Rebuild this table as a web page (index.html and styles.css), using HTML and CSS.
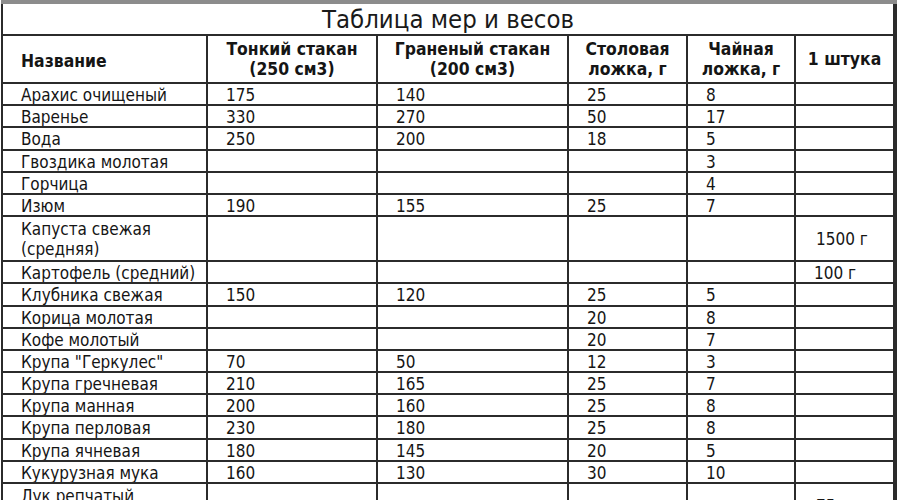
FILE: index.html
```html
<!DOCTYPE html>
<html lang="ru">
<head>
<meta charset="utf-8">
<title>Таблица мер и весов</title>
<link rel="stylesheet" href="styles.css">
</head>
<body>
<div class="sheet">
  <div class="title">Таблица мер и весов</div>

  <div class="h name">Название</div>
  <div class="h">Тонкий стакан<br>(250 см3)</div>
  <div class="h">Граненый стакан<br>(200 см3)</div>
  <div class="h">Столовая<br>ложка, г</div>
  <div class="h">Чайная<br>ложка, г</div>
  <div class="h">1 штука</div>

  <div class="c">Арахис очищеный</div><div class="c">175</div><div class="c">140</div><div class="c">25</div><div class="c">8</div><div class="c"></div>
  <div class="c">Варенье</div><div class="c">330</div><div class="c">270</div><div class="c">50</div><div class="c">17</div><div class="c"></div>
  <div class="c">Вода</div><div class="c">250</div><div class="c">200</div><div class="c">18</div><div class="c">5</div><div class="c"></div>
  <div class="c">Гвоздика молотая</div><div class="c"></div><div class="c"></div><div class="c"></div><div class="c">3</div><div class="c"></div>
  <div class="c">Горчица</div><div class="c"></div><div class="c"></div><div class="c"></div><div class="c">4</div><div class="c"></div>
  <div class="c">Изюм</div><div class="c">190</div><div class="c">155</div><div class="c">25</div><div class="c">7</div><div class="c"></div>
  <div class="c tall">Капуста свежая<br>(средняя)</div><div class="c tall"></div><div class="c tall"></div><div class="c tall"></div><div class="c tall"></div><div class="c tall mid">1500 г</div>
  <div class="c">Картофель (средний)</div><div class="c"></div><div class="c"></div><div class="c"></div><div class="c"></div><div class="c">100 г</div>
  <div class="c">Клубника свежая</div><div class="c">150</div><div class="c">120</div><div class="c">25</div><div class="c">5</div><div class="c"></div>
  <div class="c">Корица молотая</div><div class="c"></div><div class="c"></div><div class="c">20</div><div class="c">8</div><div class="c"></div>
  <div class="c">Кофе молотый</div><div class="c"></div><div class="c"></div><div class="c">20</div><div class="c">7</div><div class="c"></div>
  <div class="c">Крупа "Геркулес"</div><div class="c">70</div><div class="c">50</div><div class="c">12</div><div class="c">3</div><div class="c"></div>
  <div class="c">Крупа гречневая</div><div class="c">210</div><div class="c">165</div><div class="c">25</div><div class="c">7</div><div class="c"></div>
  <div class="c">Крупа манная</div><div class="c">200</div><div class="c">160</div><div class="c">25</div><div class="c">8</div><div class="c"></div>
  <div class="c">Крупа перловая</div><div class="c">230</div><div class="c">180</div><div class="c">25</div><div class="c">8</div><div class="c"></div>
  <div class="c">Крупа ячневая</div><div class="c">180</div><div class="c">145</div><div class="c">20</div><div class="c">5</div><div class="c"></div>
  <div class="c">Кукурузная мука</div><div class="c">160</div><div class="c">130</div><div class="c">30</div><div class="c">10</div><div class="c"></div>
  <div class="c tall">Лук репчатый<br>(средний)</div><div class="c tall"></div><div class="c tall"></div><div class="c tall"></div><div class="c tall"></div><div class="c tall mid">75 г</div>
</div>
</body>
</html>
```

FILE: styles.css
```css
html, body {
  margin: 0;
  padding: 0;
  background: #ffffff;
  overflow: hidden;
}

body {
  font-family: "DejaVu Sans Condensed", "DejaVu Sans", sans-serif;
  color: #151515;
  height: 500px;
}

.sheet {
  margin-left: 1px;
  width: 896px;
  box-sizing: border-box;
  border-top: 4px solid #8c8c8c;
  background: #2b2b2b;
  display: grid;
  grid-template-columns: 203px 168px 189px 117px 106px 97px;
  grid-template-rows: 30px 46px repeat(6, 20.2px) 43px repeat(10, 20.2px) 43px;
  gap: 2px;
  padding: 0 2px 2px 2px;
}

.title {
  grid-column: 1 / -1;
  background: #fff;
  text-align: center;
  font-size: 25.5px;
  line-height: 31px;
  color: #1a1a1a;
}

.h {
  background: #fff;
  font-weight: bold;
  font-size: 17.4px;
  line-height: 20px;
  display: flex;
  align-items: center;
  justify-content: center;
  text-align: center;
}

.h.name {
  justify-content: flex-start;
  padding-left: 18px;
  padding-top: 3px;
}

.c {
  background: #fff;
  font-size: 17px;
  line-height: 20px;
  padding-left: 18px;
  white-space: nowrap;
  overflow: hidden;
  padding-top: 1px;
  box-sizing: border-box;
}

.c.tall {
  line-height: 20px;
  padding-top: 2px;
}

.c.mid {
  display: flex;
  align-items: center;
  padding-top: 0;
  padding-left: 20px;
}
```
